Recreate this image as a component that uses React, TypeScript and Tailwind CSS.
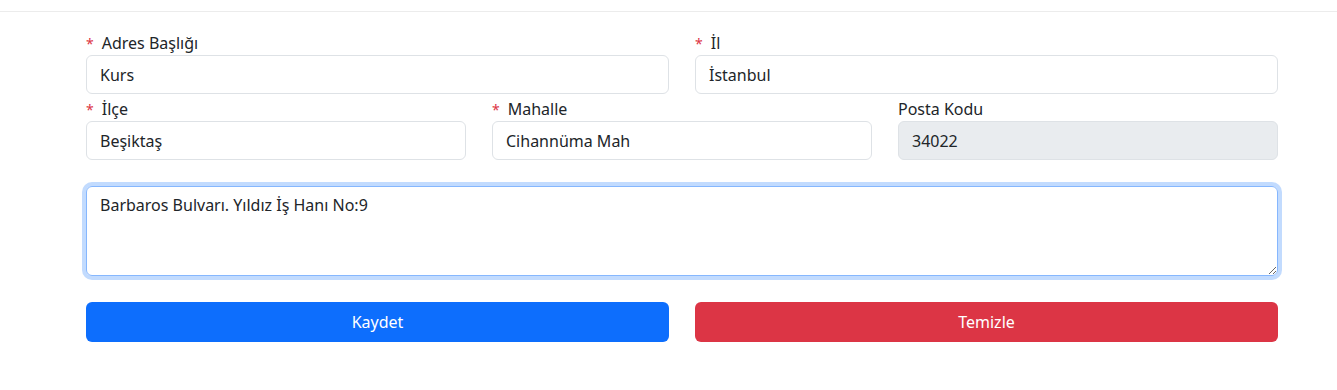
import React from "react";

const font = { fontFamily: '"Segoe UI", "Noto Sans", "Open Sans", sans-serif' };

function Label({ text, required }: { text: string; required?: boolean }) {
  return (
    <label className="block h-6 leading-6 text-[16px] text-[#212529]">
      {required ? <span className="text-[#dc3545] mr-2 text-[14px]">*</span> : null}
      {text}
    </label>
  );
}

function Field({
  label,
  value,
  required,
  disabled
}: {
  label: string;
  value: string;
  required?: boolean;
  disabled?: boolean;
}) {
  return (
    <div className="flex flex-col">
      <Label text={label} required={required} />
      <input
        readOnly
        value={value}
        className={
          "h-[39px] w-full rounded-[6px] border border-[#dee2e6] px-[13px] text-[16px] text-[#212529] outline-none " +
          (disabled ? "bg-[#e9ecef]" : "bg-white")
        }
      />
    </div>
  );
}

export default function App() {
  return (
    <div className="min-h-[390px] bg-white" style={font}>
      <div className="h-3 border-b border-[#ececec]" />
      <div className="ml-[86px] w-[1192px] pt-[19px]">
        <div className="grid grid-cols-2 gap-x-[26px]">
          <Field label="Adres Başlığı" value="Kurs" required />
          <Field label="İl" value="İstanbul" required />
        </div>
        <div className="mt-[3px] grid grid-cols-3 gap-x-[26px]">
          <Field label="İlçe" value="Beşiktaş" required />
          <Field label="Mahalle" value="Cihannüma Mah" required />
          <Field label="Posta Kodu" value="34022" disabled />
        </div>
        <textarea
          readOnly
          defaultValue="Barbaros Bulvarı. Yıldız İş Hanı No:9"
          className="mt-[26px] block h-[90px] w-full rounded-[6px] border border-[#86b7fe] px-[13px] py-[6px] text-[16px] leading-6 text-[#212529] shadow-[0_0_0_4px_rgba(13,110,253,0.25)] outline-none"
        />
        <div className="mt-[26px] grid grid-cols-2 gap-x-[26px]">
          <button className="h-10 rounded-[6px] bg-[#0d6efd] text-[16px] text-white">Kaydet</button>
          <button className="h-10 rounded-[6px] bg-[#dc3545] text-[16px] text-white">Temizle</button>
        </div>
      </div>
    </div>
  );
}
